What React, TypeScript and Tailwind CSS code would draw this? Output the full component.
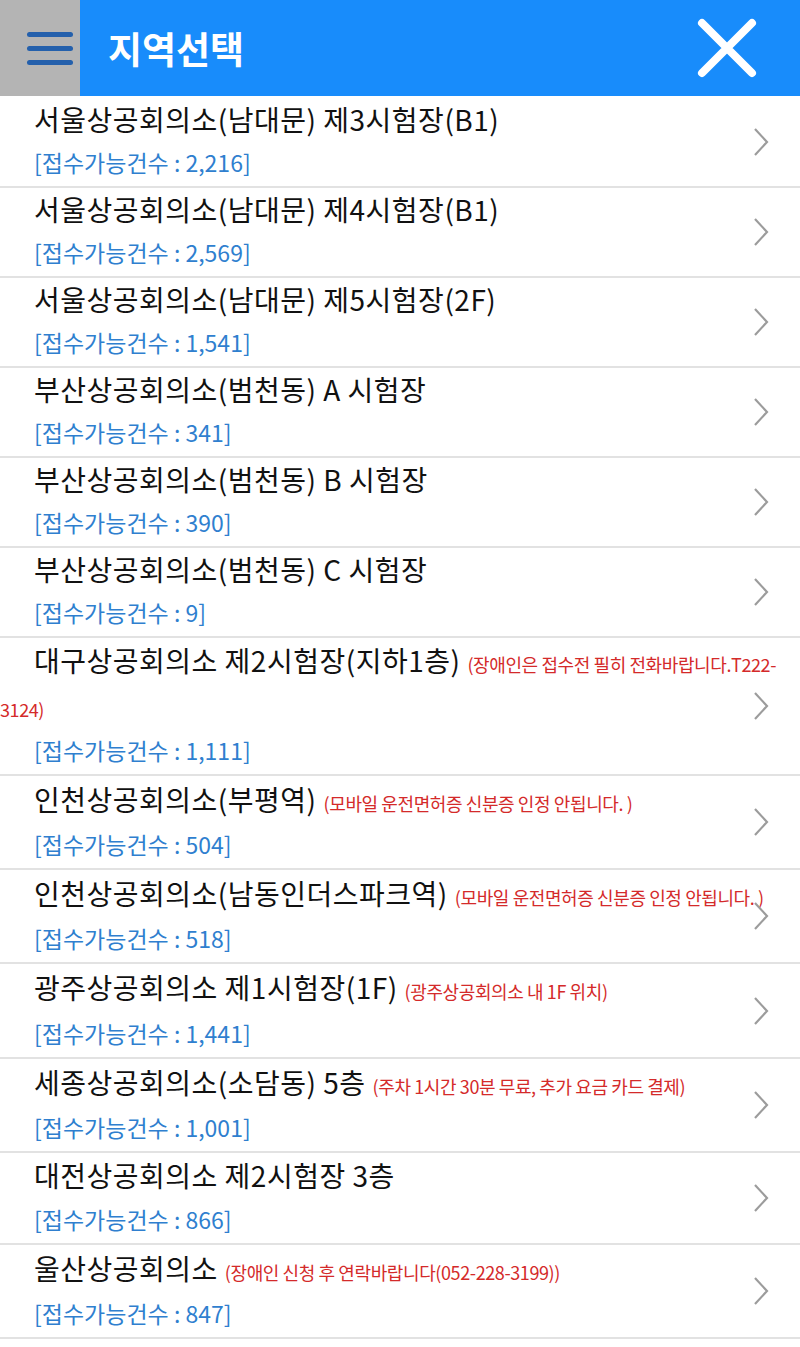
import React from 'react';

type Site = {
  name: string;
  note?: React.ReactNode;
  count: string;
  lead: string;
};

const SITES: Site[] = [
  { name: '서울상공회의소(남대문) 제3시험장(B1)', count: '2,216', lead: 'leading-[42px]' },
  { name: '서울상공회의소(남대문) 제4시험장(B1)', count: '2,569', lead: 'leading-[42px]' },
  { name: '서울상공회의소(남대문) 제5시험장(2F)', count: '1,541', lead: 'leading-[42px]' },
  { name: '부산상공회의소(범천동) A 시험장', count: '341', lead: 'leading-[42px]' },
  { name: '부산상공회의소(범천동) B 시험장', count: '390', lead: 'leading-[42px]' },
  { name: '부산상공회의소(범천동) C 시험장', count: '9', lead: 'leading-[42px]' },
  {
    name: '대구상공회의소 제2시험장(지하1층)',
    note: (
      <>
        (장애인은 접수전 필히 전화바랍니다.T222-
        <br />
        3124)
      </>
    ),
    count: '1,111',
    lead: 'leading-[45px]',
  },
  {
    name: '인천상공회의소(부평역)',
    note: '(모바일 운전면허증 신분증 인정 안됩니다. )',
    count: '504',
    lead: 'leading-[46px]',
  },
  {
    name: '인천상공회의소(남동인더스파크역)',
    note: '(모바일 운전면허증 신분증 인정 안됩니다. )',
    count: '518',
    lead: 'leading-[46px]',
  },
  {
    name: '광주상공회의소 제1시험장(1F)',
    note: '(광주상공회의소 내 1F 위치)',
    count: '1,441',
    lead: 'leading-[47px]',
  },
  {
    name: '세종상공회의소(소담동) 5층',
    note: '(주차 1시간 30분 무료, 추가 요금 카드 결제)',
    count: '1,001',
    lead: 'leading-[46px]',
  },
  { name: '대전상공회의소 제2시험장 3층', count: '866', lead: 'leading-[44px]' },
  {
    name: '울산상공회의소',
    note: '(장애인 신청 후 연락바랍니다(052-228-3199))',
    count: '847',
    lead: 'leading-[46px]',
  },
];

function Chevron() {
  return (
    <svg
      width="18"
      height="32"
      viewBox="0 0 18 32"
      className="absolute right-[30px] top-1/2 -translate-y-1/2"
    >
      <polyline points="3,3 15,16 3,29" fill="none" stroke="#9c9c9c" strokeWidth="2.2" />
    </svg>
  );
}

export default function App() {
  return (
    <div
      className="w-[800px] min-h-[1347px] bg-white"
      style={{ fontFamily: '"Noto Sans CJK KR", "Noto Sans", sans-serif' }}
    >
      {/* Header */}
      <div className="flex h-[96px] items-center bg-[#188cfb]">
        <div className="flex h-full w-[80px] flex-col items-start justify-center gap-[9px] bg-[#b4b4b4] pl-[27px]">
          <span className="block h-[5px] w-[46px] rounded-full bg-[#2460ac]" />
          <span className="block h-[5px] w-[46px] rounded-full bg-[#2460ac]" />
          <span className="block h-[5px] w-[46px] rounded-full bg-[#2460ac]" />
        </div>
        <h1 className="ml-[28px] flex-1 text-[37px] font-bold leading-none text-white">지역선택</h1>
        <svg width="60" height="60" viewBox="0 0 60 60" className="mr-[43px]">
          <path
            d="M5 5 L55 55 M55 5 L5 55"
            stroke="#ffffff"
            strokeWidth="8"
            strokeLinecap="round"
          />
        </svg>
      </div>

      {/* List */}
      <ul className="pt-[2px]">
        {SITES.map((s) => (
          <li key={s.name} className="relative border-b-2 border-[#e2e2e2] pb-[2px]">
            <div className={`indent-[34px] text-[28px] tracking-[0.5px] text-[#111111] ${s.lead}`}>
              {s.name}
              {s.note && (
                <span className="ml-[7px] text-[18px] leading-none tracking-[-0.4px] text-[#d42a2a]">
                  {s.note}
                </span>
              )}
            </div>
            <div className="pl-[34px] text-[23px] leading-[44px] text-[#2f7fcf]">
              [접수가능건수 : {s.count}]
            </div>
            <Chevron />
          </li>
        ))}
      </ul>
    </div>
  );
}
